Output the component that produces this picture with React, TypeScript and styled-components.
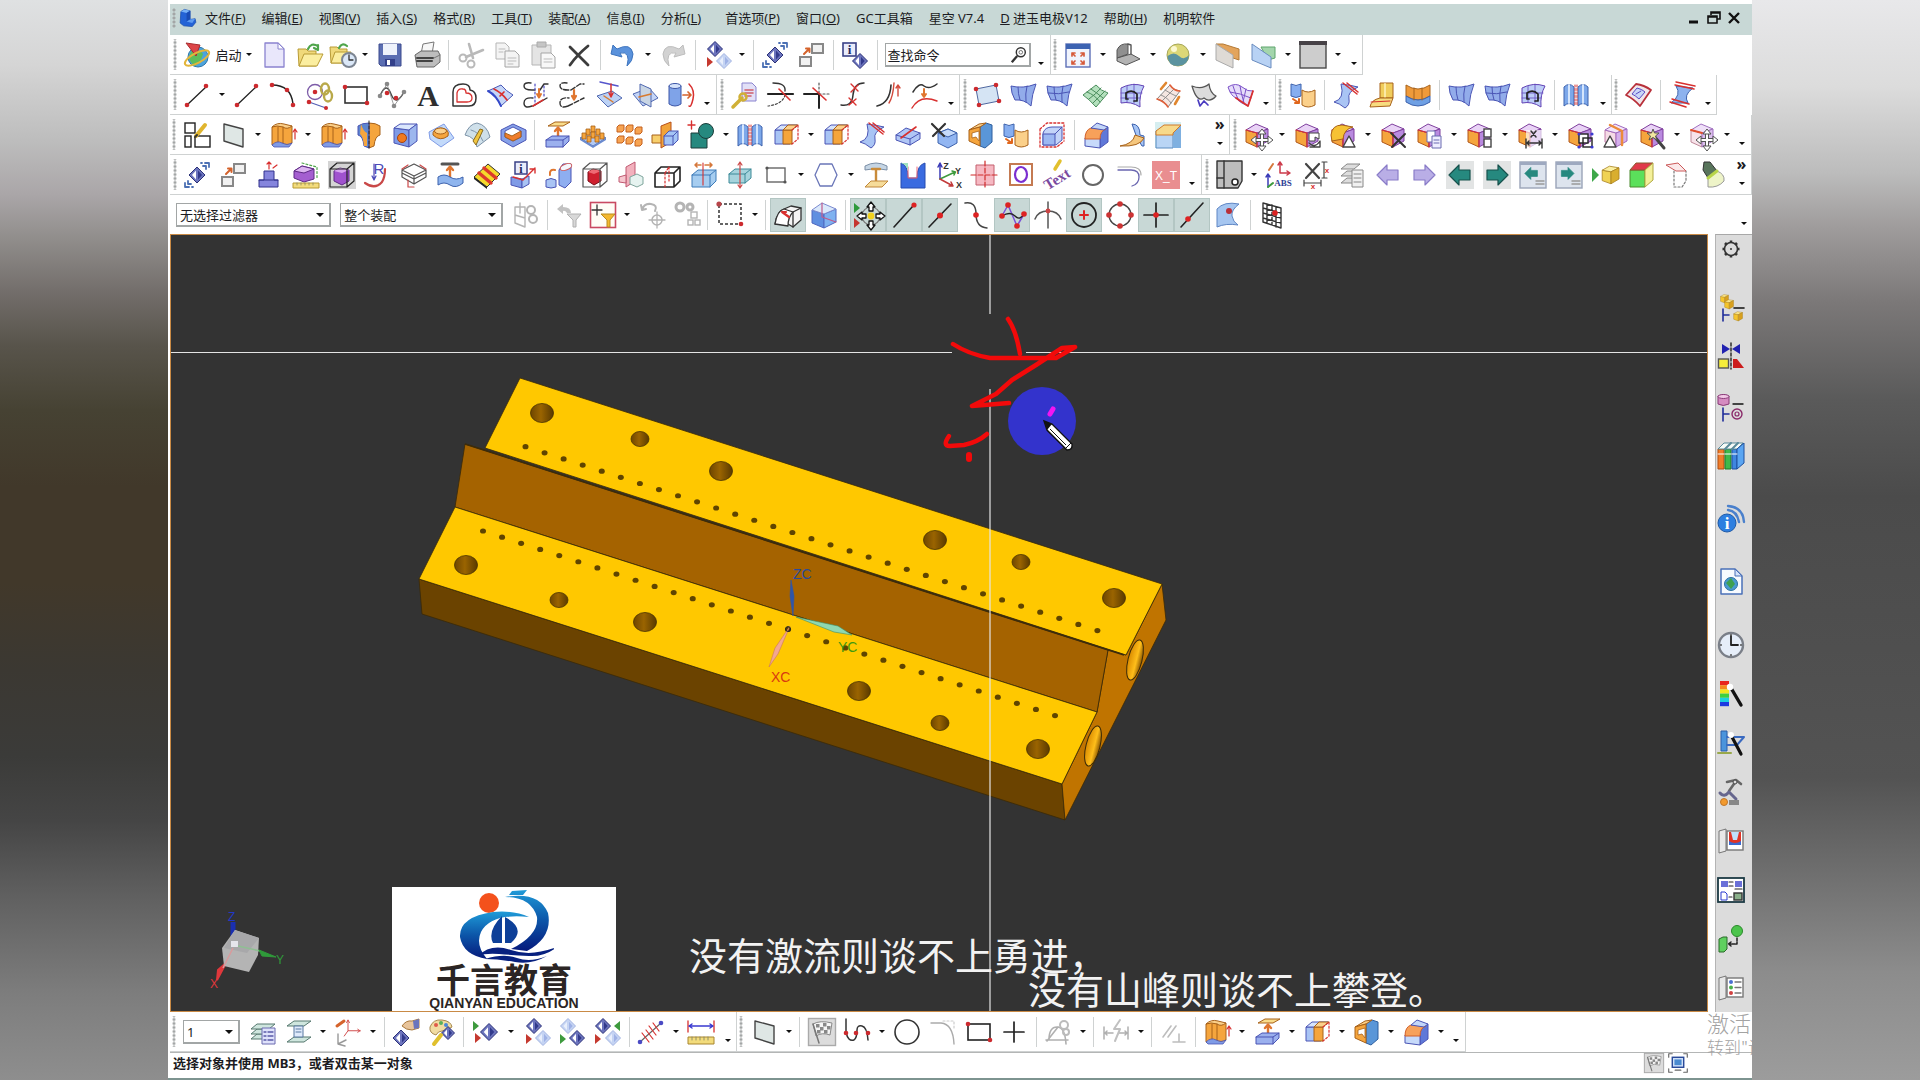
import React, { ReactNode } from 'react';
import styled, { createGlobalStyle } from 'styled-components';

const GlobalStyle = createGlobalStyle`
  *, *::before, *::after { box-sizing: border-box; }
  body { margin: 0; background: #6a6a6a; }
  button, input, select { font: inherit; color: inherit; margin: 0; padding: 0; border: 0; background: none; border-radius: 0; }
`;

const ink = '#1c1c22';
const rule = '#cfd2d2';
const amber = '#c98a45';
const pale = '#c8d8d6';

/* ---------- drawing helpers ---------- */
const line = (d: string, c = '#333', w = 1.4, dash?: string) => (
  <path d={d} fill="none" stroke={c} strokeWidth={w} strokeDasharray={dash} strokeLinecap="round" strokeLinejoin="round" />
);
const area = (d: string, f: string, c = 'none', w = 1) => <path d={d} fill={f} stroke={c} strokeWidth={w} strokeLinejoin="round" />;
const dot = (x: number, y: number, c = '#cc2a2e', r = 2.3) => <circle cx={x} cy={y} r={r} fill={c} />;
const G = (...parts: ReactNode[]) => <>{parts.map((p, i) => <g key={i}>{p}</g>)}</>;
const at = (x: number, y: number, s: number, n: ReactNode) => <g transform={`translate(${x} ${y}) scale(${s})`}>{n}</g>;

const BL = '#a9c4f4', BD = '#4a55b5', BM = '#7f9be6';
const OR = '#f5a53d', OL = '#fbd08a', OD = '#a8621a';
const RD = '#d8302f';

const cube = (f = BM, t = '#d3e2fc', s = BL, c = BD) =>
  G(area('M4 9 15 11V26L4 22Z', f, c), area('M4 9 13 4 25 6 15 11Z', t, c), area('M15 11 25 6V20L15 26Z', s, c));
const diamond = (x: number, y: number, r: number, dark = true) =>
  G(
    area(`M${x} ${y - r}L${x + r} ${y}L${x} ${y + r}L${x - r} ${y}Z`, dark ? '#6c74bd' : '#c5d4f3', dark ? '#2b3178' : '#a3b4e2'),
    area(`M${x - 1} ${y - r / 1.8}V${y + r / 1.8}L${x - r / 1.6} ${y}Z`, dark ? '#fff' : '#e9effc'),
    area(`M${x + 1} ${y - r / 1.8}V${y + r / 1.8}L${x + r / 1.6} ${y}Z`, dark ? '#323a8c' : '#9fb2e6'),
  );
const tri = (x: number, y: number, c: string, left = false) =>
  area(left ? `M${x} ${y}L${x + 6} ${y - 5}V${y + 5}Z` : `M${x} ${y - 5}L${x + 6} ${y}L${x} ${y + 5}Z`, c);
const pillar = G(
  area('M3 6Q8 3 14 5Q18 8 23 5V22Q18 26 13 22Q8 27 3 24Z', OR, OD),
  area('M3 6Q8 1 15 3L23 5Q18 9 14 6Q8 4 3 6Z', OL, OD),
  line('M9 6V24M14 6V22', OD, 1),
  area('M3 24Q8 19 13 22Q18 25 23 22L20 26H5Z', BM, BD, 0.8),
);
const upArrow = (x: number, y: number) => G(line(`M${x} ${y + 10}V${y + 1}M${x - 2} ${y + 3}L${x} ${y}L${x + 2} ${y + 3}`, RD, 1.2));
const halfBody = G(
  area('M3 9h15v14H3Z', BL, BD), area('M3 9 9 4H25L18 9Z', '#d6e4fc', BD),
  area('M11 9h9v14h-9Z', OR, OD), area('M11 9 16 4H26L20 9Z', OL, OD), line('M20 9 26 4V18L20 23', RD, 1.2, '2 2'),
);
const shell = G(
  area('M14 6 20 2 26 4V21L19 27 14 25Z', '#5a96d8', '#2f5f9e'), area('M3 9 13 3 20 2 14 6Z', OL, OD),
  area('M3 9 14 6V25L3 20Z', OR, OD), area('M6 12 13 10V20L10 16 6 17Z', '#fff', OD, 0.8),
);
const curved = G(
  area('M18 15Q19 9 26 6V21L18 27Z', '#5f78d8', BD), area('M3 17H18V27L3 25Z', '#c7dafa', BD),
  area('M3 18Q3 9 9 7L24 8Q18 10 18 18Z', '#f7a15a', '#d0602a'), area('M9 7 15 2 26 6 22 9Z', '#c3d6f8', BD),
);
const plane = area('M5 3 24 8V26L5 20Z', '#dfe7e5', '#444', 1.4);
const box2 = (x: number, y: number, w: number, h: number, c = '#222', f = 'none', sw = 1.4) => <rect x={x} y={y} width={w} height={h} fill={f} stroke={c} strokeWidth={sw} />;
const syncBody = G(area('M3 9 14 12V26L3 21Z', OR, '#b0571a'), area('M3 9 13 3 25 8 14 12Z', '#e9d3f6', '#7f3f9e'), area('M14 12 25 8V20L14 26Z', '#b98adf', '#7f3f9e'), line('M3 9 14 12V26', RD, 1.2));
const move4 = G(
  line('M19 12V26M12 19H26', '#555', 4), line('M19 12V26M12 19H26', '#fff', 2),
  area('M19 8 23 13H15ZM19 30 23 25H15ZM8 19 13 15V23ZM30 19 25 15V23Z', '#fff', '#555'),
);
const cross = (c = '#333') => line('M12 12 26 26M26 13 13 26', c, 2);
const wireCube = (c = '#222') => G(line('M2 8H19V26H2ZM2 8 9 2H26V20L19 26M19 8 26 2', c, 1.2));
const joined = G(area('M2 6Q7 1 12 6V25Q7 20 2 25Z', '#7da8ea', '#3d62ad'), area('M16 6Q21 1 26 6V25Q21 20 16 25Z', '#7da8ea', '#3d62ad'), line('M7 4V22M21 4V22', '#d4e5fc', 2), line('M13 4V24M15 4V24', RD, 1, '2 1.500'));
const linked = G(area('M2 3Q7 6 12 3V15Q7 18 2 15Z', '#86aef0', '#3d62ad'), area('M13 9Q19 13 26 9V24Q19 28 13 24Z', OL, OD), line('M4 18 10 22M10 18V22H6', '#e0661c', 2));
const redSheet = G(area('M9 3Q18 4 26 6Q15 11 17 18Q18 24 13 27Q7 22 2 21Q13 18 9 3Z', BL, BD), line('M11 2 25 13M15 2 26 11', RD, 1.5));
const greenTeal = '#26897f';
const bigArrow = (left: boolean, f: string, c: string) =>
  area(left ? 'M3 14 13 4V9H24V19H13V24Z' : 'M25 14 15 4V9H4V19H15V24Z', f, c, 1.2);
const chain = G(<ellipse cx="19" cy="8" rx="4" ry="5.500" fill="none" stroke="#b9a94a" strokeWidth="2.400" />, <ellipse cx="22" cy="15" rx="4" ry="5.500" fill="none" stroke="#b9a94a" strokeWidth="2.400" />);
const funnel = (c: string, f: string) => area('M12 13H26L21 19V26H18V19Z', f, c);
const axes = line('M8 3V17H24M8 17 3 24M8 3 6 6M8 3 10 6M24 17 21 15M24 17 21 19', '#d14b4b', 1.3);
const book = (inner: ReactNode) => G(area('M2 4 9 2V24L2 26Z', '#e8e8e8', '#777'), box2(10, 4, 16, 19, '#777', '#fff'), inner);
const circ = (x: number, y: number, r: number, c = '#333', w = 1.4, f = 'none') => <circle cx={x} cy={y} r={r} fill={f} stroke={c} strokeWidth={w} />;
const letter = (x: number, y: number, s: string, size: number, c: string, weight = 700, family = 'Liberation Sans') => (
  <text x={x} y={y} fontSize={size} fontWeight={weight} fill={c} fontFamily={`"${family}", sans-serif`} textAnchor="middle">{s}</text>
);
const layers = G(...[17, 12, 7].map((y) => area(`M2 ${y + 4} 8 ${y - 1}H26L20 ${y + 4}Z`, '#cfe6de', '#56786f')));
const ruled = G(area('M2 5Q14 8 27 3Q23 13 22 25Q15 18 6 19Q2 12 2 5Z', '#92acea', BD), line('M9 6Q9 13 11 19M18 5Q16 13 17 21', BD, 1));
const mesh = G(ruled, line('M3 12Q14 14 24 11', BD, 1));
const pocketPic = G(area('M12 5H24V17H12Z', '#e03426'), area('M14 5H22L20 13H16Z', '#bfe0fb'), area('M12 14Q18 18 24 14V18H12Z', '#3a6ad0'));
const flag = G(box2(0.5, 0.5, 27, 27, '#aaa', '#dcdcdc'), area('M5 6Q12 2 24 5L22 17Q14 14 8 18Z', '#f5f5f5', '#888'), line('M5 6 11 25', '#777', 1.5), ...[[8, 6], [15, 5], [12, 9], [19, 8], [9, 12], [16, 12]].map(([x, y]) => area(`M${x} ${y}h3.500v3.500h-3.500Z`, '#888')));
const tiltedSheet = area('M2 15 17 10 27 17 13 26Z', '#bcd2f5', '#5068b0');

/* ---------- icon set ---------- */
const icons: Record<string, ReactNode> = {
  globe: G(circ(15, 16, 10, '#2f76a8', 1, '#4ba3dd'), area('M9 9Q16 8 20 13Q18 21 12 25Q6 21 6 15Z', '#5dbd5c'), area('M3 2 17 4 13 15Z', '#dd4548', '#a82c30'), <ellipse cx="14" cy="17" rx="13.500" ry="5" fill="none" stroke="#e2b53b" strokeWidth="2" transform="rotate(-28 14 17)" />),
  file: G(area('M5 2H18L24 8V26H5Z', '#e9e7fb', '#8a83cf', 1.3), area('M18 2V8H24Z', '#fff', '#8a83cf')),
  open: G(area('M2 8H10L12 10H20V25H3Z', '#f0d97a', '#b89b35'), area('M3 25 8 13H27L21 25Z', '#fbeea0', '#b89b35'), line('M12 8Q15 1 22 5M22 9V4M22 9 18 7', '#4fa54b', 2.2)),
  recent: G(area('M1 6H8L10 8H18V22H2Z', '#f0d97a', '#b89b35'), area('M2 22 6 11H22L18 22Z', '#fbeea0', '#b89b35'), line('M10 7Q13 1 18 5', '#4fa54b', 2.2), circ(20, 19, 7, '#7c8592', 2, '#dbe8f8'), line('M20 14V19H24', '#333', 1.3)),
  save: G(area('M3 3H25V25H5L3 23Z', '#5b6eb2', '#3d4b8e'), area('M7 3H21V14H7Z', '#eef2fb'), area('M9 18H19V25H9Z', '#33408a'), area('M11 19H14V24H11Z', '#fff')),
  print: G(area('M10 3 21 1 19 13H8Z', '#f7f7f7', '#777'), area('M2 14 8 10H25L27 14V21L21 26H4Z', '#bdbdbd', '#666'), line('M4 17H20M4 20H19', '#444', 2), line('M21 17 27 14', '#777', 1)),
  cut: G(line('M12 3 16 17M26 9 9 16', '#b9b9b9', 2.6), circ(6, 17, 3.5, '#b9b9b9', 2), circ(14, 23, 3.5, '#b9b9b9', 2)),
  copy: G(area('M3 2H12L16 6V18H3Z', '#f4f4f4', '#b5b5b5'), area('M12 10H22L26 14V26H12Z', '#f4f4f4', '#a5a5a5'), line('M6 8H12M6 11H10M15 17H23M15 20H23M15 23H20', '#bbb', 1)),
  paste: G(area('M3 4H22V24H3Z', '#e4e4e4', '#b5b5b5'), area('M8 1H17V6H8Z', '#c5c5c5', '#aaa'), area('M12 12H22L26 16V27H12Z', '#f8f8f8', '#a5a5a5'), line('M15 18H23M15 21H23', '#bbb', 1)),
  del: G(line('M5 6 23 24M23 5Q12 14 5 24', '#3c3c3c', 2.8)),
  undo: area('M2 13 4 4 8 8Q22 1 24 13Q24 20 18 25Q22 10 11 12L13 16Z', '#5a92dc', '#3d74be'),
  redo: area('M26 13 24 4 20 8Q6 1 4 13Q4 20 10 25Q6 10 17 12L15 16Z', '#d2d2d2', '#bdbdbd'),
  showHide: G(diamond(12, 8, 7.5), diamond(21, 20, 7.5, false), tri(4, 21, '#c5392f')),
  dArrows: G(diamond(14, 14, 8), line('M20 5H23V8M22 2H26V6M18 2H19M8 23H5V20M6 26H2V22M9 26H10', '#4b70b4', 1.8)),
  squares: G(box2(15, 3, 11, 9, '#888', '#f1f1f1', 2), box2(3, 16, 11, 9, '#888', '#f1f1f1', 2), line('M7 13 12 8M9 7.500H12.500V11', '#d5632c', 2)),
  infoD: G(box2(2, 2, 13, 13, '#3a4187', '#e9ecfb', 1.6), letter(8.5, 13, 'i', 13, '#20265e', 700, 'Liberation Serif'), diamond(19, 20, 7.5)),
  fit: G(box2(2, 3, 24, 23, '#5d70b7', '#f0f4fd'), area('M2 3H26V8H2Z', '#3c63b2'), line('M8 12 11 15M8 12H11M8 12V15M20 12 17 15M20 12H17M20 12V15M8 23 11 20M8 23H11M8 23V20M20 23 17 20M20 23H17M20 23V20', '#d65a3a', 1.7)),
  bracket: G(area('M3 17 17 13 26 18 12 24 3 20Z', '#b3b3b3', '#555'), area('M3 17V9Q6 2 14 3V13L3 17Z', '#8f8f8f', '#555'), line('M14 3 17 4V13', '#555', 1.4)),
  sphere: G(circ(14, 14, 11, '#a6a658', 1, '#dcd777'), area('M3.500 15Q10 10 15 15T25 14Q24 25 14 25Q4 25 3.500 15Z', '#5b93a0'), dot(10, 8, '#fbf8d2', 3)),
  clipO: G(area('M3 3 10 3 26 8V19L20 17Z', '#e3a45c', '#b57a35'), area('M3 3 20 14V27L3 19Z', '#dedad5', '#aaa')),
  clipB: G(area('M12 6H26V17L19 19Z', '#a3d5ac', '#5fa56d'), area('M3 3 22 16V27L3 19Z', '#b8d2f4', '#6a8cbf')),
  backdrop: G(box2(1, 1, 26, 26, '#4a4a4a', '#cdcdcd'), area('M0 0H28V4H0Z', '#474247')),

  segment: G(line('M4 24 24 5', '#222', 1.3), dot(4, 24), dot(23, 5)),
  arc: G(line('M3 4Q22 4 24 23', '#222', 1.5), dot(3, 4), dot(18, 9), dot(24, 24)),
  circleChain: G(circ(9, 11, 7.5, '#7d5ca8', 1.3), dot(9, 11), chain, line('M3 21 20 27', '#5560b5', 1.3), dot(3, 21), dot(20, 27, '#cc2a2e', 2)),
  rect: G(box2(3, 6, 22, 16, '#333', 'none', 1.6), dot(3, 6), dot(25, 22)),
  spline: G(line('M2 15Q8 0 13 13T26 11', '#444', 1.4), line('M2 15 9 3 16 25 26 11', '#888', 0.8), dot(2, 15, '#888'), dot(9, 3, '#888'), dot(9, 12), dot(18, 17), dot(26, 11, '#888'), dot(16, 25, '#888')),
  textA: letter(14, 25, 'A', 30, '#2f2f2f', 700, 'Liberation Serif'),
  offset: G(area('M3 25V11Q3 3 13 3Q20 3 20 9Q26 10 26 17Q26 25 19 25Z', '#fff', '#333', 1.5), line('M7 21V12Q8 7 13 8Q16 8 16 12Q22 12 22 17Q22 21 17 21Z', RD, 1.3)),
  sheetBlue: G(area('M2 10 15 4Q20 10 27 14L15 25Q10 14 2 10Z', '#c4d5f7', '#4858b7'), line('M2 10Q10 14 15 25', '#3549c9', 2), line('M8 8Q16 12 21 19M14 15 18 11', RD, 1.7)),
  bridge: G(line('M9 2Q2 1 2 5T10 9H13M18 9 22 3H26M10 25Q2 28 2 22T11 17M11 25 25 17', '#333', 1.4), line('M13 3V24M22 5V17', '#4a4ac4', 1.2, '2 2'), line('M11 25 21 19', RD, 1.5), line('M17 8V16M15 13 17 16.500 19 13', '#e0762f', 2)),
  bridge2: G(line('M9 2Q2 1 2 5T10 9H13L22 3H26M10 25Q2 28 2 22T11 17M10 25 26 17', '#333', 1.4, '5 2'), line('M16 9V18M14 15 16 18.500 18 15', '#e0762f', 2.2)),
  project: G(tiltedSheet, line('M5 1 23 5', '#5555cc', 1.5), line('M9 15 18 21', '#d77a2e', 1.5), line('M16 3V15M14 12 16 16 18 12', RD, 1.5)),
  intersect: G(area('M2 13 18 7 27 17 12 25Z', '#c4d5f7', '#5068b0'), area('M9 3 20 8V26L9 20Z', '#c8d5e4', '#5068b0'), line('M8 16 20 13', '#d77a2e', 1.6)),
  unwrap: G(area('M2 5Q8 1 14 5V23Q8 27 2 23Z', '#7fa3e8', '#3d57a8'), <ellipse cx="8" cy="5" rx="6" ry="2.500" fill="#d5e3fb" stroke="#3d57a8" />, line('M16 14H23M21 11 24 14 21 17', '#d5632c', 1.7), line('M22 3Q28 9 26 18T22 25', RD, 1.5)),

  editDoc: G(area('M12 2H22L26 6V20H12Z', '#e2e0f7', '#8a83cf'), line('M15 9H23M15 12H23M15 15H21', '#cf5e6b', 1.6), line('M3 26 12 17', '#d0b036', 3.5), circ(13, 16, 3.5, '#d0b036', 2.5)),
  trim: G(line('M2 13H27', '#222', 2.2), line('M7 2Q20 2 19 10', '#333', 1.4), line('M19 14Q17 23 2 25', '#444', 1.2, '2 2'), line('M13 8 24 19', RD, 1.6)),
  corner: G(line('M2 13H17V27', '#222', 2), line('M17 13H27M17 2V13', '#555', 1.2, '2 2'), line('M11 7 24 19', RD, 1.6)),
  sCurve: G(line('M3 24Q14 26 15 14T26 2', '#333', 1.5), line('M13 3 20 10M20 4 13 11M11 17 18 24M18 18 11 24', RD, 1.4)),
  stretch: G(line('M3 25Q16 22 17 4', '#333', 1.6), line('M20 2Q19 16 15 22M24 5V15M22 7 24 4 26 7', '#d34a3c', 1.4)),
  curveFit: G(line('M3 11Q9 1 14 5T27 3', '#333', 1.5), line('M2 27Q10 13 27 20', RD, 1.5), line('M14 8V15M12 13 14 16 16 13', '#e0762f', 2)),
  quad: G(area('M3 8 23 4 26 20 6 24Z', '#d5e4f4', '#5068a0'), dot(3, 8), dot(23, 4), dot(26, 20), dot(6, 24)),
  ruled, mesh,
  meshGreen: G(area('M2 14 15 4Q20 10 27 12L15 26Q8 18 2 14Z', '#b4e0bd', '#4a8d5c'), line('M6 11Q14 14 19 21M10 8Q16 12 22 17M8 18Q15 13 20 7M12 22Q17 17 24 10', '#4a8d5c', 1)),
  meshHole: G(area('M3 7Q14 1 26 5Q21 14 22 26Q13 20 3 22Z', '#bccdf6', '#6040b5'), line('M3 12H24M3 17H22M9 5V21M16 3V22', '#6c58c4', 0.9), line('M10 18H8V12Q14 8 19 13V20H16', '#222', 1.7)),
  sweep: G(area('M3 18 16 4Q20 10 26 10L14 26Q10 20 3 18Z', '#f5e7e2', '#888'), line('M7 14Q14 17 17 22M11 9Q17 13 22 15M8 20 20 8', '#888', 0.9), line('M3 18Q10 20 14 26M16 4Q20 10 26 10', '#e0603a', 1.6), line('M12 2 7 8M25 16 21 23', '#e0862f', 2.6)),
  drape: G(area('M2 5Q12 9 19 3Q20 12 26 15Q20 22 14 17Q7 22 2 5Z', '#dcdcdc', '#555', 1.3), line('M8 19 10 25 14 20 18 24', '#4b3cc0', 1.7)),
  meshPink: G(area('M2 6Q10 1 16 6T27 10L22 25Q14 22 10 17Q5 15 2 6Z', '#e6ddfa', '#7b50c8'), line('M7 5Q9 12 13 20M14 5Q15 12 18 22M20 8 17 21M4 11Q14 12 25 17', '#7b50c8', 1), line('M27 10 22 25M10 17 22 25', RD, 1.8)),
  linked, redSheet,
  boot: G(area('M12 2H25V17H12Z', '#f0cd5c', OD), line('M17 3V16', '#fbe9a6', 2), area('M12 17 25 17 22 25 2 26Q3 19 12 17Z', '#f7dc7f', OD), line('M3 21 22 20', RD, 1)),
  tray: G(area('M2 4Q14 12 26 4V15Q14 23 2 15Z', '#ef9a3a', OD), area('M2 15Q14 23 26 15V21Q14 29 2 21Z', '#6fa0e4', '#3d62ad'), line('M10 7V19M18 7V19', OD, 1)),
  joined,
  redPatch: G(area('M2 14 12 3Q20 4 27 9L16 25Q10 18 2 14Z', '#f1e6ea', '#b8303a', 1.8), area('M8 13 13 7Q18 8 21 11L15 18Q12 15 8 13Z', '#c9d6f6', '#5a4ac4'), line('M12 13 17 10', '#5a4ac4', 1)),
  redBand: G(area('M8 5 25 7Q15 14 20 22L3 22Q14 14 8 5Z', '#8db2ee', '#3d62ad'), line('M8 1 27 5M7 4 26 8M2 21 18 26M4 18 21 23', RD, 1.5)),

  sketch: G(box2(2, 2, 10, 10), box2(2, 15, 6, 11), box2(12, 15, 15, 11), line('M13 15 22 4', '#e0b52e', 4), line('M12 16 14 14', '#333', 2)),
  plane, pillarUp: G(pillar, upArrow(26, 8)),
  revolve: G(area('M14 2Q21 2 25 5V14Q20 15 19 25L14 27Z', OR, OD), area('M14 2Q7 2 3 5V14Q8 15 9 25L14 27Z', '#5d86cf', BD), area('M6 3Q8 10 12 12V25L9 25Q8 15 5 13Z', '#f5a53d'), line('M14 0V27', '#222', 1, '3 2')),
  hole: G(area('M3 7 18 9V26L3 22Z', BM, BD), area('M3 7 9 3H26L18 9Z', '#dbe7fd', BD), area('M18 9 26 3V20L18 26Z', '#9db7ee', BD), circ(11, 17, 4.5, '#a8430e', 1, '#f07a1f')),
  pad: G(area('M2 11 17 3 27 17 14 26 3 18Z', '#c3dafa', BM), area('M6 14Q5 8 14 7Q23 8 21 15Q13 21 6 14Z', OR, OD), <ellipse cx="13.500" cy="10" rx="6" ry="3" fill={OL} stroke={OD} />),
  wedge: G(area('M2 14Q6 3 14 2Q24 4 27 16L14 26Q12 16 2 14Z', '#cfe0ea', '#7d93a8'), line('M8 9Q16 11 20 20', '#7d93a8', 1), area('M10 20 17 8 20 9 13 24Z', '#f0c540', '#8a6b20')),
  pocket: G(area('M2 9 14 3 27 9V19L14 26 2 19Z', '#86a1e8', BD), area('M6 10 14 6 22 10V16L14 20 6 16Z', '#fff', BD), area('M6 12 13 15 22 10V16L14 20 6 16Z', '#ef7d2b', OD)),
  liftPlate: G(area('M5 5 12 1H27L20 5Z', '#f9dc8a', OD), line('M15 17V7M12 10 15 6.500 18 10', '#e0762f', 2.4), area('M3 19 9 15H26V20L20 26H3Z', '#9bb0ee', BD), line('M3 19H20V26M20 19 26 15', BD, 1)),
  array: G(area('M1 17 15 10 27 17 14 25Z', '#b3caf4', '#5878b8'), area('M1 17 14 25 27 17V19L14 27 1 19Z', '#6a8ad0'), ...[[14, 8], [9, 11], [19, 11], [5, 15], [14, 14], [23, 15], [10, 18], [18, 18]].map(([x, y]) => area(`M${x - 2} ${y - 3}h4v6h-4Z`, OR, OD, 0.8))),
  copies: G(...[[2, 4], [11, 4], [20, 6], [2, 15], [11, 16], [20, 18]].map(([x, y]) => area(`M${x} ${y + 2}l2-2h5v5l-2 2h-5Z`, '#f7a452', '#c4601e', 1))),
  split: G(area('M1 14H13V22H1Z', '#f7cf6c', OD), area('M10 5 20 1V21L10 27Z', '#f1a33a', '#b8501a'), area('M13 15 18 10H27V19L22 24H13Z', '#a5c4f5', BD), line('M13 15H22V24M22 15 27 10', BD, 1)),
  unite: G(line('M1 4H8M4.500 0V8', RD, 1.4), area('M4 12H20V27H4Z', greenTeal, '#1c3d3a'), circ(19, 10, 7.5, '#1c3d3a', 1, greenTeal)),
  halfBody, blueSheet: redSheet,
  slab: G(area('M2 14 12 7 26 12V18L16 24 2 19Z', '#b0c6f5', BD), line('M2 14 16 18 26 12M16 18V24', BD, 1), line('M7 17 22 6', RD, 1.6)),
  delFace: G(area('M8 12 18 8 27 12V22L18 27 8 22Z', '#92b6f2', '#3d62ad'), area('M8 12 18 8 27 12 18 16Z', '#c5dafa', '#3d62ad'), line('M2 3 14 15M15 3 3 15', '#333', 2.2)),
  shell, frame: G(area('M5 12Q7 6 14 6H24V19L18 24H5Z', '#c3d4f8', BD), area('M5 13H17V24H5Z', '#9cb8f2', BD), line('M17 13 24 6', BD, 1), line('M2 8 9 2H26V20M2 8V26H19L26 20', RD, 1.3, '2 2')),
  curved, flap: G(area('M14 3Q22 3 22 14L26 15V25H24Q18 17 14 3Z', '#a5c4f5', '#3d62ad'), area('M2 25Q15 23 17 14L26 17Q22 26 2 25Z', '#f5c77e', OD)),
  ledge: G(area('M1 1H27V27H1Z', '#d6eef0'), area('M2 10H19V27H2Z', '#b9d5f5', '#5a8cc0'), area('M19 10 27 4V27H19Z', '#7fb0e0'), area('M2 10 10 4H27L19 12V14H2Z', '#f7d98a', '#d07a2a')),

  syncMove: G(syncBody, move4),
  syncPull: G(syncBody, area('M16 12H26V18L22 16V20H16Z', '#fff', '#444'), line('M16 22Q22 28 27 20V26H17', '#444', 1.4)),
  syncOffset: G(syncBody, area('M2 14Q3 4 13 4L24 6Q15 8 14 18L3 20Z', '#f6c234', OD), area('M20 15 26 26H14Z', '#fff', '#444', 1.4)),
  syncDel: G(syncBody, cross()), syncCopy: G(syncBody, area('M12 10H20V21H12Z', '#fff', '#6a6ab0'), area('M17 15H26V27H17Z', '#eef', '#6a6ab0'), line('M19 19H24M19 22H24', '#6a6ab0', 1)),
  syncAlign: G(syncBody, box2(19, 8, 7, 8, '#444', '#fff'), box2(19, 18, 7, 8, '#444', '#fff')),
  syncDim: G(syncBody, area('M10 9H26V27H10Z', '#ffffffaa'), line('M10 18V27M26 18V27M11 22H25M13 20 11 22 13 24M23 20 25 22 23 24', '#333', 1.4), line('M15 10 20 16M20 10 15 16', '#333', 1.5)),
  syncGroup: G(syncBody, box2(13, 13, 9, 9, '#222', '#fff'), box2(17, 17, 9, 9, '#222', 'none'), dot(13, 13, '#3a3ad0', 1.6), dot(26, 26, '#3a3ad0', 1.6), dot(26, 13, '#3a3ad0', 1.6), dot(13, 26, '#3a3ad0', 1.6)),
  syncPink: G(area('M3 9 14 12V26L3 21Z', '#f5dbe6', '#c07aa8'), area('M3 9 13 3 25 8 14 12Z', '#f4e6fa', '#a06abf'), area('M14 12 25 8V20L14 26Z', '#d5b0ec', '#a06abf'), line('M8 4 20 10V24', '#ec8b3a', 2.5), area('M8 15 14 26H2Z', '#fff', '#444', 1.4)),
  syncWand: G(syncBody, line('M16 15 26 27', '#444', 3), area('M15 8 16.500 12 21 12 17.500 15 19 19 15 16.500 11 19 12.500 15 9 12 13.500 12Z', '#f2e6a0', '#555')),
  syncPale: G(area('M3 9 14 12V26L3 21Z', '#f7e3ea', '#c08a9a'), area('M3 9 13 3 25 8 14 12Z', '#efe0f8', '#a070bf'), area('M14 12 25 8V20L14 26Z', '#dcc0ee', '#a070bf'), line('M3 9 14 12', '#e0502e', 2), move4),

  tower: G(area('M9 10H19V19H23V26H4V19H9Z', '#8585dd', '#33338c'), line('M4 19H23', '#33338c', 1), line('M14 8V1M12 3 14 1 16 3M18 7 22 4', RD, 1.2)),
  measureBox: G(area('M2 10 10 5 22 8V18L12 21 2 17Z', '#a45fd0', '#5f2a86'), area('M2 10 10 5 22 8 12 12Z', '#dcb6f0', '#5f2a86'), area('M1 22H27V27H1Z', '#f3dc7c', '#b89b35'), line('M10 2 25 6V18', '#4fa54b', 1.2, '2 2'), line('M5 22V24M9 22V24M13 22V24M17 22V24M21 22V24', '#886', 0.8)),
  boundBox: G(area('M0 0H28V28H0Z', '#d4d4d4'), area('M6 10 12 7 21 9V20L14 24 6 20Z', '#a052cf', '#5f2a86'), area('M6 10 12 7 21 9 14 12Z', '#d9a6f2'), wireCube()),
  radius: G(letter(15, 13, 'R', 15, '#4a4ab8', 400), line('M10 3V18M8 15 10 19 12 15', '#4a4ab8', 1.2), line('M1 22Q11 29 18 21Q21 16 21 8', '#c94848', 2.2)),
  wireHex: G(line('M2 9 14 3 26 9V16L14 23 2 16ZM2 9 14 15 26 9M14 15V23M2 12 14 18 26 12', '#555', 1.2), line('M8 19V26H14M8 4 2 8M20 4 26 8', '#cc4a4a', 1.2)),
  emboss: G(line('M6 3H22', '#555', 3), line('M14 16V6M11 9 14 5.500 17 9', '#e0762f', 2.4), area('M2 16Q8 12 14 16T27 16V22Q20 28 14 24T2 24Z', '#8fb5ee', '#3d62ad')),
  stripes: G(area('M1 16 15 3 27 13 14 26Z', '#f5d92c', '#333'), line('M6 12 18 22M11 7 23 17', '#dc3a2c', 3.5), area('M1 16 14 26V28L1 18Z', '#222')),
  infoBody: G(box2(6, 1, 12, 12, '#3a4187', '#e9ecfb', 1.5), letter(12, 12, 'i', 12, '#20265e', 700, 'Liberation Serif'), area('M2 16 13 18V27L2 24Z', BM, BD), area('M13 18 20 15V23L13 27Z', BL, BD), line('M4 16 14 19 26 7M21 8H26V12', RD, 1.4)),
  pipe: G(area('M14 9 18 3H26V21L20 27 14 24Z', '#8eaef0', BD), <ellipse cx="21" cy="6" rx="6" ry="3" fill="#f4f7fe" stroke="#d05a5a" transform="rotate(-20 21 6)" />, area('M1 19Q6 16 11 19V26Q6 28 1 26Z', '#a9c4f4', BD), line('M5 14Q4 8 10 9', '#e0762f', 2)),
  redBox: G(area('M7 11 12 8 20 10V20L13 24 7 20Z', '#cf1f2e', '#7c0e18'), area('M7 11 12 8 20 10 13 13Z', '#ef6a74'), wireCube('#555')),
  mirrorBody: G(area('M9 6 18 1V20L9 26Z', '#f2b1bd', '#c05a72'), area('M2 16 9 14V22L2 21Z', '#f6c7cf', '#c05a72'), area('M13 16 20 13 26 16V23L20 26 13 23Z', '#e6f3f0', '#7fa59c')),
  sliceBox: G(line('M2 12 8 6H27V20L21 26H2ZM2 12H21V26M21 12 27 6', '#222', 1.6), line('M12 12V26M16 6V20M12 12 16 6', RD, 1.2, '2 2')),
  insert: G(area('M2 14 8 9H26V20L20 26H2Z', '#a6cdf0', '#3c7ab8'), line('M2 14H20V26M20 14 26 9', '#3c7ab8', 1), line('M13 2V24', RD, 1.1), line('M11 4H5M7 2 5 4 7 6M15 4H22M20 2 22 4 20 6', '#d5783c', 1.6)),
  insert2: G(area('M3 13 9 8H25V17L19 22H3Z', '#a6d3dc', '#3c8a98'), line('M3 13H19V22M19 13 25 8', '#3c8a98', 1), line('M14 1V27M12 4 14 1 16 4M12 24 14 27 16 24', '#cc4a4a', 1.2)),
  rectPts: G(box2(5, 7, 18, 14, '#666', 'none', 1.4), dot(5, 7, '#555', 1.6), dot(23, 21, '#555', 1.6)),
  hexagon: area('M8 3H20L25 14 20 25H8L3 14Z', '#fff', '#6a76b8', 1.3),
  stamp: G(area('M3 5Q14 -1 25 5V9Q14 6 3 9Z', '#c5d5e4', '#7a8ea6'), line('M14 8V20M10 8H18', '#c98b3a', 2.4), area('M3 26 9 20H26L20 26Z', '#f6dc9a', '#c0873a')),
  channel: G(area('M2 2Q9 4 9 17H18Q18 4 26 2V27H2Z', '#3a6be0', '#274cb0'), line('M9 6V17H18V6', '#e67', 1), area('M2 2Q7 3 9 10V2Z', '#9fe3c0')),
  csys: G(line('M5 18V3M3 6 5 2 7 6', '#3b3bb8', 1.5), line('M5 18 20 11M17 10 20.500 11 19 14', '#3d9a3d', 1.5), line('M5 18 18 25M14 25 18 25 16 21', '#c23a3a', 1.5), letter(11, 8, 'Z', 9, '#333'), letter(23, 13, 'Y', 9, '#333'), letter(24, 27, 'X', 9, '#333')),
  pinkCross: G(area('M5 4H23V24H5Z', '#f6b8c2', '#c4616f'), line('M14 0V27M0 14H27', '#d02a2a', 1.2, '5 2')),
  circleBox: G(box2(3, 3, 22, 21, '#c47a52', '#fff', 2), <ellipse cx="14" cy="13.500" rx="6" ry="7.500" fill="none" stroke="#7b2fd0" strokeWidth="2.200" />),
  textPen: G(<g transform="rotate(-32 14 18)">{letter(14, 23, 'Text', 15, '#7a4aa0', 700, 'Liberation Serif')}</g>, line('M12 8 17 0', '#e2c02e', 3.5)),
  ring: circ(14, 14, 10, '#666', 2),
  fillet: G(line('M2 9H15Q23 9 23 16T16 25', '#6a66b0', 1.3), line('M2 6H15Q25 6 25 14', '#aaa', 1.2)),
  xt: G(area('M0 0H28V28H0Z', '#e98e90'), letter(14, 19, 'X_T', 12, '#fff', 400)),
  gauge: G(area('M2 0H27V20L23 27H2Z', '#bdbdbd', '#333', 1.4), line('M9 0V27M2 17H9', '#333', 1.4), circ(20, 21, 3, '#222', 1.5, '#fff')),
  csysAbs: G(line('M15 1V12H25M22 10 25 12 22 14M13 4 15 1 17 4', '#cc3a4a', 1.5), line('M3 14V26M1 16 3 13 5 16', '#3b3bb8', 1.5), line('M3 26 8 22', '#3d9a3d', 2), letter(18, 25, 'ABS', 9, '#2f3f96', 700, 'Liberation Serif'), line('M8 3 4 9', '#d5783c', 2)),
  dimX: G(line('M4 3 17 17M17 3 4 17', '#444', 2.2), line('M22 1V17M20 1H25M20 17H25M2 19V25M19 19V25M2 22H19', '#444', 1.2), letter(25, 12, 'x', 8, RD), letter(11, 28, 'x', 8, RD)),
  listStack: G(...[3, 10, 17].map((y) => area(`M3 ${y + 5} 9 ${y}H22L16 ${y + 5}Z`, '#ddd', '#888')), area('M14 9H25V26H14Z', '#f0f0f0', '#888'), line('M16 13H23M16 17H23M16 21H23', '#888', 1)),
  prev: bigArrow(true, '#b9aee6', '#8a7cc8'), next: bigArrow(false, '#b9aee6', '#8a7cc8'),
  prevT: G(area('M0 0H28V28H0Z', '#e2e4e4'), bigArrow(true, greenTeal, '#17524d')), nextT: G(area('M0 0H28V28H0Z', '#e2e4e4'), bigArrow(false, greenTeal, '#17524d')),
  prevP: G(box2(1, 1, 26, 26, '#9aa4b8', '#dde4ee'), area('M1 1H27V4H1Z', '#9ea9c0'), at(4, 4, 0.6, bigArrow(true, greenTeal, greenTeal)), line('M17 20H25M17 23H25', '#999', 1.4)),
  nextP: G(box2(1, 1, 26, 26, '#9aa4b8', '#dde4ee'), area('M1 1H27V4H1Z', '#9ea9c0'), at(4, 4, 0.6, bigArrow(false, greenTeal, greenTeal)), line('M17 20H25M17 23H25', '#999', 1.4)),
  yellowCube: G(at(8, 2, 0.8, cube('#f0d254', '#fbf0a0', '#d9ae2e', '#a8801e')), area('M1 7 8 14 1 21Z', '#3ea84a')),
  greenCube: G(area('M3 9H18V26H3Z', '#5be05b', '#4a8a2e'), area('M3 9 9 2H26L18 9Z', '#e03a4a', '#8a5a2e'), area('M18 9 26 2V19L18 26Z', '#f4f09a', '#b0a840')),
  ghost: G(line('M10 10V26H18L22 20V10', '#777', 1.2, '2 2'), area('M2 4 14 2 22 10H12Z', '#fbe9ea', '#cc5a5a')),
  lamp: G(area('M4 1H10L17 10 8 17 3 9Z', '#59755c', '#333'), area('M8 17 17 10Q25 13 24 20Q18 27 8 26Z', '#eef4c8', '#999'), line('M8 17 17 10', '#b8d44a', 3)),

  gridChain: G(line('M4 6H14V26L4 22ZM4 14 14 17M9 2V12', '#b4b4b4', 1.4), circ(20, 9, 4, '#b4b4b4', 2), circ(22, 18, 4, '#b4b4b4', 2)),
  backFunnel: G(area('M2 8 8 3V6Q16 6 16 12H12Q10 9 8 10V13Z', '#c2c2c2'), funnel('#b0b0b0', '#d8d8d8')),
  filter: G(box2(1.5, 1.5, 25, 25, '#c94a62', '#fffdf6', 1.6), line('M3 9H13M8 4V14', '#333', 1.3), funnel('#b88a1e', '#f4b82e')),
  refresh: G(line('M4 9Q6 2 13 3T17 10M4 9 3 4M4 9 8 8', '#b4b4b4', 2), circ(19, 19, 5, '#b4b4b4', 1.5), line('M19 11V27M11 19H27', '#b4b4b4', 1.3)),
  gears: G(circ(7, 6, 4, '#b4b4b4', 3), circ(17, 6, 3, '#b4b4b4', 3), box2(18, 11, 6, 6, '#b4b4b4'), box2(15, 19, 5, 5, '#b4b4b4'), box2(22, 19, 5, 5, '#b4b4b4')),
  lasso: G(<rect x="3" y="3" width="22" height="20" fill="none" stroke="#333" strokeWidth="1.500" strokeDasharray="3 2" />, dot(3, 3, '#b8454a', 2.6), dot(25, 23)),
  solid: G(area('M1 23Q3 10 10 8L17 5 27 7V19L19 26 14 23Z', '#f4f4f4', '#333', 1.3), area('M1 23Q3 10 10 8L19 11Q14 16 14 25Z', '#fff', '#333', 1.3), line('M19 11V26M19 11 27 7', '#333', 1.3), line('M8 11 15 16M8 11H12', RD, 2.2)),
  glassCube: G(area('M2 9 14 13V27L2 22Z', '#5f8fe0', '#5068c0'), area('M14 13 26 8V21L14 27Z', '#7fb2f0', '#5068c0'), area('M2 9 12 2 26 8 14 13Z', '#dbe9fb', '#7a8ad0'), line('M12 2V16L26 21', '#c05a8a', 1.2)),
  snapAll: G(circ(17, 15, 9, '#777', 1.2), dot(17, 15, '#f2d21e', 3.4), ...['M17 1 21 6H19V10H15V6H13Z', 'M17 29 21 24H19V20H15V24H13Z', 'M3 15 8 11V13H12V17H8V19Z', 'M31 15 26 11V13H22V17H26V19Z'].map((d) => area(d, '#fff', '#111', 1.3)), area('M0 2 6 7 0 12Z', '#2f9a3c'), area('M0 17 6 22 0 27Z', '#c5352f')),
  snapEnd: G(line('M4 26 23 5', '#222', 1.6), dot(24, 4, '#d22', 2.6)), snapMid: G(line('M3 26 25 3', '#222', 1.6), dot(14, 14.5, '#d22', 3)),
  snapCtl: G(line('M3 2Q14 0 14 13T25 27', '#444', 1.5), dot(14, 14, '#d22', 2.8)),
  snapPole: G(line('M4 15 10 4 19 25 26 13', '#7b50d8', 1.5), line('M4 15Q12 10 17 15T26 13', '#222', 1.4), dot(4, 15, '#d22', 2.8), dot(10, 4, '#d22', 2.8), dot(19, 25, '#d22', 2.8), dot(26, 13, '#d22', 2.8)),
  snapInt: G(line('M14 1V27M1 18Q4 10 14 10T27 18', '#555', 1.5), dot(14, 10, '#c44', 2.4)),
  snapCen: G(circ(14, 14, 12, '#222', 1.8), line('M14 10V18M10 14H18', '#d22', 2)),
  snapQuad: G(circ(14, 14, 11, '#444', 1.4), dot(14, 3, '#c33', 2.8), dot(14, 25, '#c33', 2.8), dot(3, 14, '#c33', 2.8), dot(25, 14, '#c33', 2.8)),
  snapPt: G(line('M14 2V26M2 14H26', '#222', 1.7), dot(14, 14, '#d22', 2.8)), snapOn: G(line('M3 26 25 2', '#222', 1.6), dot(10, 18, '#d22', 2.8)),
  snapFace: G(area('M3 8Q10 0 25 3Q17 9 18 15T24 24Q12 22 3 26Z', '#a6c6f0', '#5f86c4'), dot(15, 10, '#b8303a', 3)),
  snapGrid: G(line('M5 2 23 7V27L5 21ZM5 7 23 12M5 12 23 17M5 17 23 22M9 3V22M14 4V24M18 6V26', '#333', 1.4), dot(17, 12, '#d22', 2.8)),

  layerList: G(layers, area('M13 10H26V26H13Z', '#dfe2fb', '#6a6ab0'), line('M15 14H17M19 14H24M15 18H17M19 18H24M15 22H17M19 22H24', '#5a5aa8', 1.3)),
  layerCopy: G(area('M2 8 9 3H26L19 8Z', '#cfe6de', '#56786f'), area('M2 24 9 19H26L19 24Z', '#cfe6de', '#56786f'), area('M9 8H18V19H9Z', '#dfeafb', '#5878a0'), line('M11 11H16M11 14H16', '#5878a0', 1)),
  csysMove: G(at(8, 0, 0.75, axes), line('M4 26V16M4 26 12 22M4 26 11 28', '#999', 1.4), line('M3 8 10 3', '#d5632c', 3)),
  diamondHand: G(diamond(9, 20, 8), area('M10 8Q14 2 20 3L27 1V10L20 12Q14 12 10 8Z', '#e8c49a', '#a8793e'), area('M21 3 27 1V10L22 11Z', '#6a74bd')),
  palette: G(area('M2 9Q5 1 14 2T24 9Q18 13 14 13T8 17Q1 15 2 9Z', '#f1dca2', '#a8894e'), dot(8, 7, '#e05a4a', 2), dot(13, 5, '#5ab05a', 2), dot(18, 7, '#4a86d8', 2), diamond(20, 15, 6.5), line('M6 26 13 17', '#e0c02e', 4)),
  hideOne: G(diamond(17, 14, 8.5), tri(1, 8, '#3d9a3d'), tri(3, 20, '#c5392f')), showOne: G(diamond(10, 8, 7.5, false), diamond(19, 20, 7.5), tri(2, 21, '#3d9a3d')),
  swapShow: G(diamond(10, 8, 7.5), diamond(20, 20, 7.5, false), tri(21, 8, '#3d9a3d', true), tri(2, 21, '#c5392f')),
  comb: G(line('M3 24 24 5', '#666', 1.2), line('M5 15 12 24M9 12 16 21M12 8 19 17M16 5 22 13', RD, 1.2), dot(3, 24, '#4a4ac4'), dot(24, 5, '#4a4ac4')),
  ruler: G(line('M1 3V14M27 3V14', RD, 1.3), line('M2 8H26M5 6 2 8 5 10M23 6 26 8 23 10', '#3a3ad0', 1.4), area('M1 19H27V26H1Z', '#f3dc7c', '#a8862e'), line('M5 19V22M9 19V22M13 19V22M17 19V22M21 19V22', '#886', 0.9)),
  flag,
  profile: G(line('M3 1V14Q5 24 11 22Q14 20 14 12Q14 7 19 8T25 22', '#333', 1.5), dot(3, 15), dot(13, 15), dot(25, 15)),
  circle: circ(14, 14, 12, '#333', 1.6), roundCorner: G(line('M2 5H12Q24 6 25 26', '#aaa', 1.4), line('M14 3H25V12', '#ccc', 1.2, '2 2')),
  rectDots: G(box2(3, 6, 22, 16, '#222', 'none', 1.6), dot(3, 6), dot(25, 22)), plus: line('M14 4V24M4 14H24', '#222', 1.7),
  greyShape: G(line('M2 22H24M5 22Q5 9 13 9T22 26M3 23 14 9', '#b0b0b0', 1.6), circ(20, 7, 4, '#bbb', 2), circ(22, 14, 3, '#bbb', 2)),
  greyDim: G(line('M2 9V21M26 9V21M3 15H11M17 15H25M5 13 3 15 5 17M23 13 25 15 23 17', '#b0b0b0', 1.5), line('M18 2 12 11H18L13 23', '#c0c0c0', 2)),
  constraint: G(line('M3 19 11 8M8 19 16 8M13 24H25M19 16V24', '#bdbdbd', 1.6)),

  gear: G(circ(14, 14, 6.5, '#333', 1.6), ...[0, 45, 90, 135, 180, 225, 270, 315].map((a) => <path d="M14 5.500V8" stroke="#333" strokeWidth="2.600" transform={`rotate(${a} 14 14)`} />), dot(14, 14, '#333', 1)),
  assembly: G(at(2, 0, 0.38, cube('#f5c52c', '#fbe58a', '#d8a01e', '#a8801e')), at(6, 5, 0.42, cube('#f5c52c', '#fbe58a', '#d8a01e', '#a8801e')), at(15, 17, 0.42, cube('#f5c52c', '#fbe58a', '#d8a01e', '#a8801e')), line('M6 16V28M6 22H12', '#1e2c9a', 1.6), line('M17 15H27', '#111', 1.6)),
  constraints: G(area('M5 2 13 7 5 12Z', '#2222b0'), area('M23 2 15 7 23 12Z', '#2222b0'), line('M14 1V27', '#111', 1.3, '3 2'), box2(1.5, 17, 10, 9, '#555', '#f7ee3a'), area('M16 17H20L27 26H16Z', '#cc1c1c')),
  partTree: G(area('M1 3Q6 0 12 3V11Q6 14 1 11Z', '#d48ac0', '#8a3a78'), <ellipse cx="6.500" cy="3.500" rx="5.500" ry="2" fill="#f2c8e6" stroke="#8a3a78" />, line('M16 11H26', '#111', 1.4), line('M6 15V28M6 21H12', '#1e2c9a', 1.6), circ(20, 21, 5, '#8a2a6a', 1.4), circ(20, 21, 2, '#8a2a6a', 1.2)),
  books: G(area('M1 7H7V27H1Z', '#f07d28', '#b34e10'), area('M8 7H14V27H8Z', '#3fb84a', '#1e7a2a'), area('M15 7H20V27H15Z', '#3f86e0', '#1e50a0'), area('M1 7 7 1H26L20 7Z', '#f7fbf7', '#5a8a9a'), line('M8 7 14 1M15 7 21 1', '#5a8a9a', 2), area('M20 7 27 1V21L20 27Z', '#5aa5f2', '#1e50a0'), line('M1 12H7M8 12H14M15 12H20', '#fff', 1)),
  feed: G(circ(10, 18, 9, '#1e5aa8', 1, '#2e7fe0'), letter(10, 24, 'i', 17, '#fff', 700, 'Liberation Serif'), line('M11 5Q20 6 22 17M11 1Q26 2 27 17', '#4a80cc', 2.4)),
  webDoc: G(area('M4 1H18L25 8V26H4Z', '#f7fafe', '#4a70b8', 1.5), area('M18 1V8H25Z', '#d5e3fa', '#4a70b8'), circ(14, 16, 6.5, '#2a70a0', 1, '#4a9ad0'), area('M9 15 14 10 18 16 14 21Z', '#3fa050')),
  clock: G(circ(14, 14, 12, '#7a7f88', 2.4, '#e6eef9'), line('M14 5V14H21', '#222', 1.8), ...[0, 90, 180, 270].map((a) => <path d="M14 3V5" stroke="#555" strokeWidth="1.500" transform={`rotate(${a} 14 14)`} />)),
  rainbow: G(...['#e8261e', '#f58a1e', '#f2e61e', '#3fd03f', '#1ed0e0', '#1e3ae0'].map((c, i) => area(`M3 ${1 + i * 4.2}h9v4.200h-9Z`, c)), line('M14 8 24 25', '#111', 3.4), dot(13, 7, '#fff', 3.2)),
  cfd: G(area('M4 2H10V22H4Z', '#4a94dc', '#2a5fa8'), line('M10 8H27L20 16H10', '#3a6ac0', 2), line('M1 24H14', '#98a84a', 2), line('M15 8 24 25', '#111', 3.2), dot(14, 6, '#fff', 3)),
  robot: G(line('M10 4 19 2 24 6M19 3 12 13', '#666', 2.6), circ(18, 4, 2, '#444', 1, '#ddd'), line('M3 15Q7 20 12 14L19 21', '#66668e', 3), circ(7, 24, 3.5, '#c0762a', 1, '#f29a2e'), area('M12 22H22V27H12Z', '#888')),
  bookPic: book(pocketPic),
  layout: G(box2(1, 2, 26, 24, '#1c3a44', '#fff', 1.8), area('M4 5H11V11H4Z', '#6a70d8'), area('M18 5H25V11H18Z', '#6a70d8'), line('M12 6H16M12 10H16M18 13H25M12 21H15', '#222', 1.2), area('M4 16H8L10 18V24H4Z', '#fff', '#2a3ad0'), box2(17, 17, 8, 7, '#333', '#8ab08a')),
  rebuild: G(area('M2 14 6 12H10V24L7 27H2Z', '#5fd05f', '#2a6a2a'), circ(20, 6, 5.5, '#2a8a2a', 1, '#4cc44c'), line('M20 13V19H12M14 17 11.500 19 14 21', '#222', 1.5, '3 1')),
  bookList: book(G(dot(14, 8, '#4a70d0', 2), dot(14, 13.5, '#4ab04a', 2), dot(14, 19, '#d04040', 2), line('M18 8H24M18 13.500H24M18 19H24', '#777', 1.3))),
  appMark: G(area('M4 5 9 2 17 4V16L24 15 25 20 20 26 8 25 3 21Z', '#2463d6', '#174aa8'), area('M4 5 9 2 17 4 12 7Z', '#76b1f7'), area('M12 7 17 4V16L12 19Z', '#1a4cb4'), area('M12 19 17 16 24 15 20 21Z', '#5d9bf2')),
  focus: G(box2(6, 6, 16, 14, '#2a4a9a', '#cfe0f8', 2), area('M9 9H19V17H9Z', '#4a8ad0'), line('M1 6V1H6M22 1H27V6M27 22V27H22M6 27H1V22M10 24H18', '#666', 1.6)),
};

const Svg = styled.svg<{ $size?: number }>`
  width: ${(p) => p.$size ?? 28}px;
  height: ${(p) => p.$size ?? 28}px;
  flex: none;
  display: block;
  overflow: visible;
`;
const Icon = ({ name, size }: { name: string; size?: number }) => (
  <Svg viewBox="0 0 28 28" $size={size} aria-hidden="true">{icons[name]}</Svg>
);

/* ---------- frame ---------- */
const Stage = styled.div`
  min-height: 100vh;
  display: grid;
  grid-template-columns: 168fr minmax(0, 1584fr) 168fr;
  font: 13px/18px "Noto Sans", "Noto Sans CJK SC", sans-serif;
  color: ${ink};
`;
const Blur = styled.div<{ $right?: boolean }>`
  background: ${(p) =>
    p.$right
      ? 'linear-gradient(to bottom, #e8e8ea 0%, #dcdcdc 8%, #bcbcbc 16%, #9f9c9c 21%, #7b7878 28%, #5a5a5a 37%, #4b4b4b 46%, #4f4f4f 60%, #535353 72%, #6c6c6c 80%, #8c8c8c 90%, #9c9c9c 100%)'
      : 'linear-gradient(to bottom, #dfe1e2 0%, #d5d5d5 6%, #bdbdbd 13%, #aaa6a8 18%, #918e8c 22%, #736e6b 27%, #58544b 32%, #464233 38%, #41382a 45%, #41382a 54%, #3b3832 62%, #3b3b39 70%, #454545 76%, #606060 83%, #7d7d7d 92%, #8e8e8e 100%)'};
`;
const AppWindow = styled.main`
  position: relative;
  display: flex;
  flex-direction: column;
  min-width: 0;
  overflow: hidden;
  background: #fff;
  padding: 4px 0 0 2px;
  border-bottom: 2px solid #7d9490;
`;
const Grip = styled.span`
  flex: 9 1 0;
  align-self: stretch;
  margin: 4px 0;
  background: radial-gradient(circle, #a3a6a6 1px, transparent 2px) center / 4px 4px repeat-y;
`;
const MenuBar = styled.nav`
  height: 31px;
  display: flex;
  align-items: center;
  background: ${pale};
  padding: 0 8px 3px 0;
`;
const MenuGrip = styled(Grip)`
  flex: 0 0 8px;
`;
const MenuList = styled.ul`
  list-style: none;
  display: flex;
  gap: 16px;
  margin: 0 auto 0 7px;
  padding: 0;
`;
const MenuItem = styled.li<{ $gap?: boolean }>`
  margin-left: ${(p) => (p.$gap ? 8 : 0)}px;
  white-space: nowrap;
`;
const MenuButton = styled.button`
  display: block;
`;
const WinButton = styled.button`
  width: 20px;
  height: 20px;
  display: grid;
  place-items: center;
`;

/* ---------- toolbars ---------- */
const Row = styled.div<{ $cols: string; $h?: number }>`
  display: grid;
  grid-template-columns: ${(p) => p.$cols};
  height: ${(p) => p.$h ?? 40}px;
  flex: none;
`;
const Band = styled.div<{ $plain?: boolean }>`
  display: flex;
  align-items: center;
  min-width: 0;
  border: 0 solid ${rule};
  border-width: ${(p) => (p.$plain ? '0' : '0 1px 1px 0')};
`;
const Tool = styled.button<{ $on?: boolean; $u?: number }>`
  flex: ${(p) => p.$u ?? 36} 1 0;
  min-width: 0;
  height: 34px;
  display: flex;
  align-items: center;
  justify-content: center;
  background: ${(p) => (p.$on ? pale : 'transparent')};
  box-shadow: ${(p) => (p.$on ? 'inset 0 0 0 1px #b3c6c3' : 'none')};
`;
const Drop = styled.button<{ $low?: boolean }>`
  flex: ${(p) => (p.$low ? 17 : 14)} 1 0;
  min-width: 0;
  height: 34px;
  display: flex;
  justify-content: center;
  align-items: ${(p) => (p.$low ? 'flex-end' : 'center')};
  padding-bottom: ${(p) => (p.$low ? 7 : 0)}px;
`;
const Caret = styled.span<{ $big?: boolean }>`
  margin-right: ${(p) => (p.$big ? 7 : 0)}px;
  border: ${(p) => (p.$big ? 4 : 3)}px solid transparent;
  border-top-color: #111;
  border-bottom-width: 0;
`;
const Divider = styled.span`
  flex: 8 1 0;
  height: 30px;
  background: linear-gradient(${rule}, ${rule}) center / 1px 100% no-repeat;
`;
const Space = styled.span<{ $u: number }>`
  flex: ${(p) => p.$u} 1 0;
`;
const Label = styled.button`
  flex: 27 1 0;
  min-width: 0;
  white-space: nowrap;
`;
const More = styled.button`
  flex: 19 1 0;
  min-width: 0;
  height: 34px;
  display: flex;
  flex-direction: column;
  align-items: center;
  justify-content: space-between;
  padding-bottom: 7px;
  font-size: 16px;
  font-weight: 700;
  line-height: 12px;
`;
const Field = styled.label<{ $u: number }>`
  flex: ${(p) => p.$u} 1 0;
  min-width: 0;
  height: 24px;
  display: flex;
  align-items: center;
  background: #fff;
  box-shadow: inset 1px 1px #a2a6a6, inset -2px -2px #a2a6a6;
`;
const Picker = styled.select`
  appearance: none;
  flex: 1;
  min-width: 0;
  padding-left: 4px;
  height: 20px;
`;
const Search = styled.input`
  flex: 1;
  min-width: 0;
  padding-left: 3px;
  &::placeholder { color: ${ink}; opacity: 1; }
`;
const Lens = styled(Svg)`
  margin-right: 3px;
`;

const Choice = ({ label, value, units }: { label: string; value: string; units: number }) => (
  <Field $u={units}>
    <Picker aria-label={label} defaultValue={value}><option>{value}</option></Picker>
    <Caret $big />
  </Field>
);

/* Item syntax: name = tool, +name = pressed tool, v = drop arrow, . = toolbar menu, | = divider, _n = space */
const Tools = ({ items }: { items: string }) => (
  <>
    {items.split(' ').map((t, i) => {
      if (t === 'v') return <Drop key={i} aria-label="更多选项"><Caret /></Drop>;
      if (t === '.') return <Drop key={i} $low aria-label="工具条选项"><Caret /></Drop>;
      if (t === '|') return <Divider key={i} />;
      if (t === '#') return <Grip key={i} />;
      if (t === '»') return <More key={i} aria-label="其余命令">»<Caret /></More>;
      if (t[0] === '_') return <Space key={i} $u={Number(t.slice(1))} />;
      const on = t[0] === '+';
      const [name, units] = t.replace('+', '').split(':');
      return (
        <Tool key={i} $on={on} $u={units ? Number(units) : 36} aria-label={name}>
          <Icon name={name} />
        </Tool>
      );
    })}
  </>
);

const menus: [string, string, boolean?][] = [
  ['文件', 'F'], ['编辑', 'E'], ['视图', 'V'], ['插入', 'S'], ['格式', 'R'], ['工具', 'T'], ['装配', 'A'], ['信息', 'I'], ['分析', 'L'],
  ['首选项', 'P', true], ['窗口', 'O'], ['GC工具箱', ''], ['星空 V7.4', ''], ['进玉电极V12', 'D'], ['帮助', 'H'], ['机明软件', ''],
];

/* ---------- work area ---------- */
const Work = styled.div`
  flex: 1;
  min-height: 0;
  display: grid;
  grid-template-columns: minmax(0, 1fr) 37px;
  column-gap: 7px;
`;
const Canvas = styled.section`
  position: relative;
  overflow: hidden;
  background: #333;
  border: 1px solid ${amber};
`;
const Scene = styled.svg`
  position: absolute;
  inset: 0;
  width: 100%;
  height: 100%;
`;
const LogoCard = styled.div`
  position: absolute;
  left: 221px;
  bottom: 0;
  width: 224px;
  height: 124px;
  background: #fff;
  display: flex;
  flex-direction: column;
  align-items: center;
  justify-content: flex-end;
  color: #2b2524;
`;
const LogoArt = styled.svg`
  width: 100px;
  height: 74px;
`;
const LogoName = styled.div`
  font: 700 34px/32px "Noto Sans CJK SC", sans-serif;
`;
const LogoSub = styled.div`
  font: 700 14px/16px "Liberation Sans", sans-serif;
  white-space: nowrap;
`;
const Caption = styled.p<{ $x: number; $b: number }>`
  position: absolute;
  left: ${(p) => p.$x}px;
  bottom: ${(p) => p.$b}px;
  margin: 0;
  color: #f2f2f2;
  font: 400 38px/38px "Noto Sans CJK SC", sans-serif;
  white-space: nowrap;
`;
const Side = styled.aside`
  background: #dcdcdc;
  border-left: 1px solid #b4b4b4;
  border-top: 1px solid #a8a8a8;
  display: flex;
  flex-direction: column;
  align-items: center;
  padding-right: 6px;
`;
const SideButton = styled.button<{ $gap: number }>`
  width: 28px;
  height: 28px;
  margin-top: ${(p) => p.$gap}px;
`;
const Status = styled.footer`
  height: 26px;
  flex: none;
  display: flex;
  align-items: center;
  gap: 4px;
  padding: 0 64px 5px 3px;
  font-weight: 700;
  border-top: 1px solid #b4b6b6;
`;
const StatusText = styled.span`
  margin-right: auto;
`;
const Watermark = styled.div`
  position: absolute;
  right: 0;
  bottom: 20px;
  width: 45px;
  overflow: hidden;
  color: #a3a3a3;
  white-space: nowrap;
  font: 300 17px/22px "Noto Sans CJK SC", sans-serif;
  pointer-events: none;
`;
const WatermarkTitle = styled.div`
  font-size: 22px;
  line-height: 28px;
`;

const bigHoles = [[542, 413], [721, 471], [935, 540], [1114, 598], [466, 565], [645, 622], [859, 691], [1038, 749]];
const midHoles = [[640, 439], [1021, 562], [559, 600], [940, 723]];
const rows = [[525.5, 446.7, 1097.4, 630.6], [483, 531, 1055, 715.6]];

const Model = () => (
  <Scene viewBox="171 235 1536 776" preserveAspectRatio="none" role="img" aria-label="模型视图">
    <defs>
      <linearGradient id="bore"><stop offset="0" stopColor="#6e4600" /><stop offset=".45" stopColor="#9a6400" /><stop offset="1" stopColor="#5a3a00" /></linearGradient>
      <linearGradient id="bore2"><stop offset="0" stopColor="#d98a00" /><stop offset=".6" stopColor="#ffbe1a" /><stop offset="1" stopColor="#8a5600" /></linearGradient>
    </defs>
    <g stroke="#3a2a08" strokeWidth="0.8" strokeLinejoin="round">
      <path d="M419 579 422 614 1065 820 1062 784Z" fill="#6b4300" />
      <path d="M1162 584 1166 620 1065 820 1062 784 1097 712 1108 650 1126 655Z" fill="#c07400" />
      <path d="M465 444 455 507 1097 712 1108 650Z" fill="#a56300" />
      <path d="M520 378 1162 584 1126 655 485 448Z" fill="#ffc800" />
      <path d="M455 507 419 579 1062 784 1097 712Z" fill="#ffc800" />
    </g>
    <path d="M465 444 1124 655" stroke="#3d2c0a" strokeWidth="1.600" />
    {bigHoles.map(([x, y]) => <ellipse key={x} cx={x} cy={y} rx="11.500" ry="9.500" fill="url(#bore)" stroke="#4a3300" strokeWidth="0.8" />)}
    {midHoles.map(([x, y]) => <ellipse key={x} cx={x} cy={y} rx="9" ry="7.500" fill="url(#bore)" stroke="#4a3300" strokeWidth="0.8" />)}
    {rows.map(([x1, y1, x2, y2]) =>
      Array.from({ length: 31 }, (_, i) => (
        <ellipse key={`${x1}-${i}`} cx={x1 + ((x2 - x1) * i) / 30} cy={y1 + ((y2 - y1) * i) / 30} rx="3" ry="2.600" fill="#5f4400" />
      )),
    )}
    {[[1135, 660], [1093, 746]].map(([x, y]) => <ellipse key={x} cx={x} cy={y} rx="7" ry="20.500" transform={`rotate(14 ${x} ${y})`} fill="url(#bore2)" stroke="#3a2a08" />)}
    <path d="M793 616 790 596 791 580 794 596Z" fill="#2f55a8" stroke="#2f55a8" strokeWidth="0.6" />
    <path d="M796 617 838 626 852 635 834 632Z" fill="#8fd8b0" stroke="#3f8f68" strokeWidth="0.6" />
    <path d="M790 626 778 654 769 667 775 648Z" fill="#f3a78f" stroke="#c9785a" strokeWidth="0.6" />
    <circle cx="788" cy="629" r="2.400" fill="none" stroke="#222" />
    <g fontFamily='"Liberation Sans", sans-serif' fontSize="14">
      <text x="793" y="579" fill="#2a4a9c">ZC</text>
      <text x="838" y="652" fill="#3f9a10">YC</text>
      <text x="771" y="682" fill="#d83a10">XC</text>
    </g>
    <path d="M990 234V314M990 389V1011M170 352.500H952M1026 352.500H1708" stroke="#e4e4e4" strokeWidth="1.200" fill="none" />
    <g fill="none" stroke="#f20a0a" strokeWidth="4.500" strokeLinecap="round" strokeLinejoin="round">
      <path d="M953 344Q968 354 990 358H1056L1075 347 1062 348 1036 365 1012 380 996 394 972 406 1009 403" />
      <path d="M1008 319Q1016 330 1020 354" />
      <path d="M949 436Q942 446 950 446L964 445Q978 442 987 434" />
      <path d="M969 455 969 459" strokeWidth="6" />
    </g>
    <circle cx="1042" cy="421" r="34" fill="#3333cc" />
    <path d="M1053 409 1050 414" stroke="#f215f2" strokeWidth="5" strokeLinecap="round" />
    <path d="M1044 421 1052 424 1072 444Q1073 450 1067 450L1047 430Z" fill="#fff" stroke="#111" strokeWidth="1.400" />
    <path d="M1044 421 1052 424 1047 430Z" fill="#111" />
    <path d="M1050 429 1066 445M1065 449 1071 443" stroke="#111" strokeWidth="1" />

    <path d="M233 922V936" stroke="#1a2fb0" strokeWidth="5" />
    <path d="M226 963 217 980 218 970Z" fill="#e0383c" stroke="#e0383c" strokeWidth="2" />
    <path d="M235 930 259 938 258 955 249 972 224 966 222 948Z" fill="#b4b4b4" />
    <path d="M235 930 259 938 247 953 224 948Z" fill="#a8a8aa" />
    <path d="M231 941H238V947H231Z" fill="#e6e6ec" />
    <path d="M238 946 260 951" stroke="#8fbf93" strokeWidth="1.500" />
    <path d="M233 948 223 968" stroke="#d99a9c" strokeWidth="1.500" />
    <path d="M259 950 276 957 262 956Z" fill="#2f9a3a" stroke="#2f9a3a" />
    <g fontFamily='"Liberation Sans", sans-serif' fontSize="12">
      <text x="228" y="921" fill="#2238c8">Z</text>
      <text x="276" y="964" fill="#2f9a3a">Y</text>
      <text x="210" y="988" fill="#e0383c">X</text>
    </g>
  </Scene>
);

const sidebar: [string, number][] = [
  ['gear', 0], ['assembly', 30], ['constraints', 21], ['partTree', 23], ['books', 21], ['feed', 35], ['webDoc', 35], ['clock', 35],
  ['rainbow', 21], ['cfd', 21], ['robot', 21], ['bookPic', 21], ['layout', 21], ['rebuild', 21], ['bookList', 21],
];

export default function App() {
  return (
    <Stage>
      <GlobalStyle />
      <Blur />
      <AppWindow>
        <MenuBar>
          <MenuGrip />
          <Icon name="appMark" size={20} />
          <MenuList>
            {menus.map(([text, key, gap]) => (
              <MenuItem key={text} $gap={gap}>
                <MenuButton>
                  {key === 'D' ? <><u>D</u> {text}</> : <>{text}{key && <>(<u>{key}</u>)</>}</>}
                </MenuButton>
              </MenuItem>
            ))}
          </MenuList>
          <WinButton aria-label="最小化"><Svg viewBox="0 0 14 14" $size={14}><path d="M2 11H11" stroke="#111" strokeWidth="3" /></Svg></WinButton>
          <WinButton aria-label="还原"><Svg viewBox="0 0 14 14" $size={14}><path d="M4 4V1H13V8H10M1 5H10V12H1ZM1 6H10M4 2H13" fill="none" stroke="#111" strokeWidth="1.600" /></Svg></WinButton>
          <WinButton aria-label="关闭"><Svg viewBox="0 0 14 14" $size={14}><path d="M2 2 12 12M12 2 2 12" stroke="#111" strokeWidth="2.400" /></Svg></WinButton>
        </MenuBar>

        <Row $cols="881fr 312fr 389fr">
          <Band>
            <Tools items="# globe" />
            <Label>启动</Label>
            <Tools items="v file open recent:30 v save print | cut copy paste del | undo v redo | showHide v | dArrows squares | infoD |" />
            <Space $u={3} />
            <Field $u={146}>
              <Search aria-label="查找命令" placeholder="查找命令" />
              <Lens viewBox="0 0 20 20" $size={18}><circle cx="12" cy="7" r="5" fill="none" stroke="#333" strokeWidth="1.600" /><circle cx="12" cy="7" r="2" fill="none" stroke="#666" /><path d="M8 11 2 18" stroke="#333" strokeWidth="2.600" /></Lens>
            </Field>
            <Tools items="_2 ." />
          </Band>
          <Band><Tools items="# fit v bracket v sphere v clipO clipB v backdrop v ." /></Band>
        </Row>
        <Row $cols="547fr 243fr 316fr 336fr 105fr 35fr">
          <Band><Tools items="# segment v segment arc circleChain rect spline textA offset sheetBlue bridge bridge2 project intersect unwrap ." /></Band>
          <Band><Tools items="# editDoc trim corner sCurve stretch curveFit ." /></Band>
          <Band><Tools items="# quad ruled mesh meshGreen meshHole sweep drape meshPink ." /></Band>
          <Band><Tools items="# linked | redSheet boot tray | ruled mesh meshHole | joined ." /></Band>
          <Band><Tools items="# redPatch | redBand ." /></Band>
        </Row>
        <Row $cols="1060fr 522fr">
          <Band><Tools items="# sketch plane v pillarUp v pillarUp revolve hole pad wedge pocket | liftPlate array copies split unite v joined halfBody v halfBody blueSheet slab delFace shell linked frame | curved flap ledge _24 »" /></Band>
          <Band><Tools items="# syncMove v syncPull syncOffset v syncDel syncCopy v syncAlign v syncDim v syncGroup syncPink syncWand v syncPale v ." /></Band>
        </Row>
        <Row $cols="1032fr 550fr">
          <Band><Tools items="# dArrows squares tower measureBox boundBox radius wireHex emboss stripes infoBody pipe redBox mirrorBody sliceBox insert insert2 rectPts v hexagon v stamp channel csys pinkCross circleBox textPen ring fillet xt ." /></Band>
          <Band><Tools items="# gauge v csysAbs dimX listStack prev next prevT nextT prevP nextP yellowCube greenCube ghost lamp »" /></Band>
        </Row>
        <Row $cols="1fr" $h={39}>
          <Band $plain>
            <Space $u={6} />
            <Choice label="选择过滤器" value="无选择过滤器" units={155} />
            <Space $u={9} />
            <Choice label="选择范围" value="整个装配" units={163} />
            <Tools items="_4 gridChain | backFunnel:34 filter:34 v refresh gears:34 | lasso v | +solid glassCube | +snapAll +snapEnd +snapMid snapCtl +snapPole snapInt +snapCen snapQuad +snapPt +snapOn snapFace | snapGrid _444 ." />
          </Band>
        </Row>

        <Work>
          <Canvas>
            <Model />
            <LogoCard>
              <LogoArt viewBox="455 890 100 74" role="img" aria-label="千言教育">
                <defs><linearGradient id="q" x1="0" y1="0" x2="0" y2="1"><stop offset="0" stopColor="#1f9bd8" /><stop offset=".5" stopColor="#0c55a8" /><stop offset="1" stopColor="#061a7c" /></linearGradient></defs>
                <circle cx="490" cy="904" r="10" fill="#f4511c" />
                <path d="M506 898Q540 892 549 914Q554 938 528 952L512 950Q540 936 538 918Q532 898 506 898ZM513 892 528 891 524 896 510 896Z" fill="url(#q)" />
                <path d="M530 918Q515 911 494 913Q460 918 461 938Q464 956 488 960Q476 946 482 933Q492 914 530 918Z" fill="url(#q)" />
                <path d="M503 917V944H494Q488 932 503 917ZM506 918Q528 930 512 944H506Z" fill="#0d3f98" />
                <path d="M479 957Q492 944 512 951T558 948Q546 958 530 957T500 955T479 957ZM486 960Q505 954 518 959T548 957Q532 966 516 963T486 960Z" fill="#07207f" />
              </LogoArt>
              <LogoName>千言教育</LogoName>
              <LogoSub>QIANYAN EDUCATION</LogoSub>
            </LogoCard>
            <Caption $x={518} $b={38}>没有激流则谈不上勇进，</Caption>
            <Caption $x={857} $b={4}>没有山峰则谈不上攀登。</Caption>
          </Canvas>
          <Side>
            {sidebar.map(([name, gap]) => (
              <SideButton key={name} $gap={gap} aria-label={name}><Icon name={name} /></SideButton>
            ))}
          </Side>
        </Work>

        <Row $cols="567fr 729fr 286fr">
          <Band>
            <Tools items="# _4" />
            <Choice label="工作图层" value="1" units={57} />
            <Tools items="_5 layerList layerCopy v csysMove v | diamondHand palette | hideOne v showHide showOne swapShow | comb v ruler ." />
          </Band>
          <Band>
            <Tools items="# plane v | flag profile v circle roundCorner rectDots plus | greyShape v | greyDim v | constraint | pillarUp v liftPlate v halfBody v shell v curved v ." />
          </Band>
        </Row>
        <Status>
          <StatusText>选择对象并使用 MB3，或者双击某一对象</StatusText>
          <Icon name="flag" size={20} />
          <Icon name="focus" size={20} />
        </Status>
        <Watermark>
          <WatermarkTitle>激活</WatermarkTitle>
          转到"设
        </Watermark>
      </AppWindow>
      <Blur $right />
    </Stage>
  );
}
